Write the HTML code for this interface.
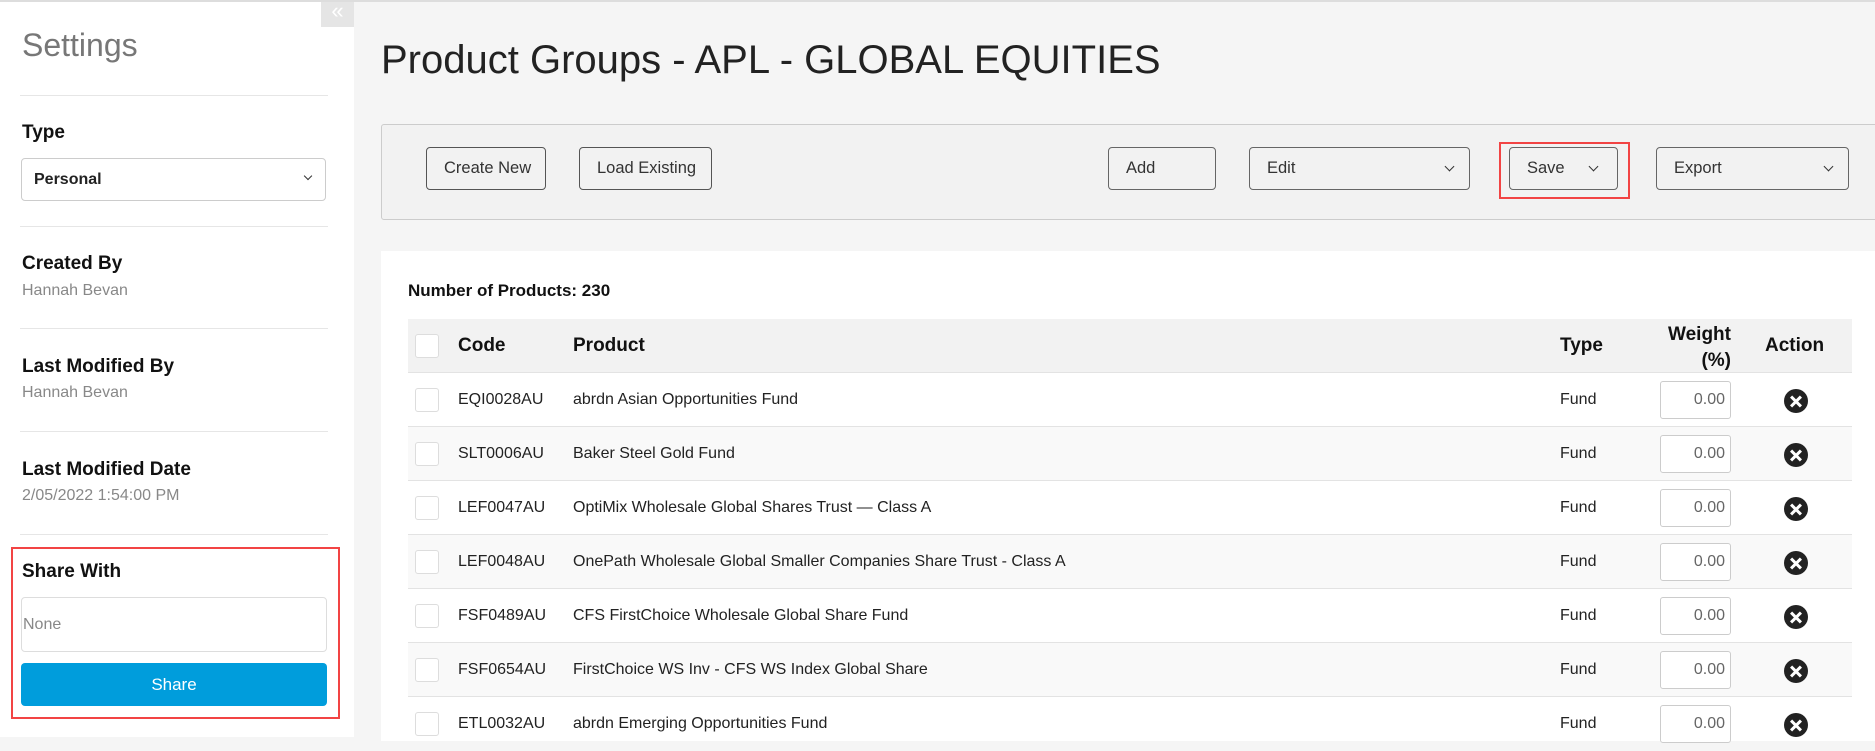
<!DOCTYPE html>
<html><head><meta charset="utf-8"><style>
*{box-sizing:border-box;margin:0;padding:0}
body{width:1875px;height:735px;overflow:hidden;font-family:"Liberation Sans",Arial,sans-serif;background:#f5f5f5;position:relative;border-top:2px solid #ddd}
.side{position:absolute;left:0;top:0;width:354px;height:735px;background:#fff}
.abs{position:absolute}
.hr{position:absolute;left:20px;width:308px;height:1px;background:#e6e6e6}
.lbl{position:absolute;left:22px;font-size:19px;font-weight:bold;color:#111}
.val{position:absolute;left:22px;font-size:16px;color:#888}
.btn{position:absolute;top:145px;height:43px;border:1px solid #555;border-radius:4px;font-size:16.5px;color:#333;padding-left:17px;line-height:41px;background:transparent}
.chev{position:absolute;right:16px;top:15px;width:7px;height:7px;border-right:1.5px solid #333;border-bottom:1.5px solid #333;transform:rotate(45deg)}
.row{position:absolute;left:408px;width:1444px;height:54px;border-top:1px solid #e3e3e3;font-size:16px;color:#222}
.row .t{position:absolute;top:0;line-height:54px}
.cb{position:absolute;left:7px;top:15px;width:24px;height:24px;border:1px solid #ddd;border-radius:3px;background:#fff}
.row .inp{position:absolute;left:1252px;top:8px;width:71px;height:38px;border:1px solid #ccc;border-radius:3px;background:#fff;text-align:right;padding-right:5px;line-height:36px;color:#666;font-size:16px}
.row .x{position:absolute;left:1376px;top:16px;width:24px;height:24px;border-radius:50%;background:#222}
.x:before,.x:after{content:"";position:absolute;left:5px;top:10.5px;width:14px;height:3px;background:#fff;transform:rotate(45deg)}
.x:after{transform:rotate(-45deg)}
</style></head><body>
<div class="side">
<div class="abs" style="left:321px;top:0;width:33px;height:25px;background:#e5e5e5;color:#fff;font-size:22px;line-height:18px;text-align:center">«</div>
<div class="abs" style="left:22px;top:25px;font-size:32px;color:#777">Settings</div>
<div class="hr" style="top:93px"></div>
<div class="lbl" style="top:120px">Type</div>
<div class="abs" style="left:21px;top:156px;width:305px;height:43px;border:1px solid #ccc;border-radius:4px;font-size:16px;font-weight:bold;color:#222;padding-left:12px;line-height:41px">Personal<div class="chev" style="top:14px;right:14px;width:6px;height:6px"></div></div>
<div class="hr" style="top:224px"></div>
<div class="lbl" style="top:251px">Created By</div>
<div class="val" style="top:280px">Hannah Bevan</div>
<div class="hr" style="top:326px"></div>
<div class="lbl" style="top:354px">Last Modified By</div>
<div class="val" style="top:382px">Hannah Bevan</div>
<div class="hr" style="top:429px"></div>
<div class="lbl" style="top:457px">Last Modified Date</div>
<div class="val" style="top:485px">2/05/2022 1:54:00 PM</div>
<div class="hr" style="top:532px"></div>
<div class="abs" style="left:11px;top:545px;width:329px;height:172px;border:2px solid #f24444"></div>
<div class="lbl" style="top:559px">Share With</div>
<div class="abs" style="left:21px;top:595px;width:306px;height:55px;border:1px solid #ddd;border-radius:4px;font-size:16px;color:#888;line-height:53px;padding-left:1px">None</div>
<div class="abs" style="left:21px;top:661px;width:306px;height:43px;background:#009ddc;border-radius:4px;color:#fff;font-size:17px;text-align:center;line-height:43px">Share</div>
</div>
<div class="abs" style="left:381px;top:36px;font-size:40px;color:#222">Product Groups - APL - GLOBAL EQUITIES</div>
<div class="abs" style="left:381px;top:122px;width:1500px;height:96px;background:#f2f2f2;border:1px solid #ccc;border-radius:3px"></div>
<div class="btn" style="left:426px;width:120px">Create New</div>
<div class="btn" style="left:579px;width:133px">Load Existing</div>
<div class="btn" style="left:1108px;width:108px;border-color:#666">Add</div>
<div class="btn" style="left:1249px;width:221px;border-color:#666">Edit<div class="chev"></div></div>
<div class="btn" style="left:1509px;width:109px;border-color:#666">Save<div class="chev" style="right:20px"></div></div>
<div class="abs" style="left:1499px;top:140px;width:131px;height:57px;border:2px solid #f24444"></div>
<div class="btn" style="left:1656px;width:193px;border-color:#666">Export<div class="chev"></div></div>
<div class="abs" style="left:381px;top:249px;width:1500px;height:490px;background:#fff"></div>
<div class="abs" style="left:408px;top:279px;font-size:17px;font-weight:bold;color:#111">Number of Products: 230</div>
<div class="abs" style="left:408px;top:317px;width:1444px;height:53px;background:#f2f2f2;font-size:19px;font-weight:bold;color:#111">
<div class="cb" style="top:15px"></div>
<div class="abs" style="left:50px;top:16px">Code</div>
<div class="abs" style="left:165px;top:16px">Product</div>
<div class="abs" style="left:1152px;top:16px">Type</div>
<div class="abs" style="left:1240px;top:3px;width:83px;text-align:right;line-height:26px">Weight<br>(%)</div>
<div class="abs" style="left:1357px;top:16px">Action</div>
</div>
<div class="row" style="top:370px"><span class="cb"></span><div class="t" style="left:50px">EQI0028AU</div><div class="t" style="left:165px">abrdn Asian Opportunities Fund</div><div class="t" style="left:1152px">Fund</div><div class="inp">0.00</div><div class="x"></div></div>
<div class="row" style="top:424px;background:#f9f9f9"><span class="cb"></span><div class="t" style="left:50px">SLT0006AU</div><div class="t" style="left:165px">Baker Steel Gold Fund</div><div class="t" style="left:1152px">Fund</div><div class="inp">0.00</div><div class="x"></div></div>
<div class="row" style="top:478px"><span class="cb"></span><div class="t" style="left:50px">LEF0047AU</div><div class="t" style="left:165px">OptiMix Wholesale Global Shares Trust — Class A</div><div class="t" style="left:1152px">Fund</div><div class="inp">0.00</div><div class="x"></div></div>
<div class="row" style="top:532px;background:#f9f9f9"><span class="cb"></span><div class="t" style="left:50px">LEF0048AU</div><div class="t" style="left:165px">OnePath Wholesale Global Smaller Companies Share Trust - Class A</div><div class="t" style="left:1152px">Fund</div><div class="inp">0.00</div><div class="x"></div></div>
<div class="row" style="top:586px"><span class="cb"></span><div class="t" style="left:50px">FSF0489AU</div><div class="t" style="left:165px">CFS FirstChoice Wholesale Global Share Fund</div><div class="t" style="left:1152px">Fund</div><div class="inp">0.00</div><div class="x"></div></div>
<div class="row" style="top:640px;background:#f9f9f9"><span class="cb"></span><div class="t" style="left:50px">FSF0654AU</div><div class="t" style="left:165px">FirstChoice WS Inv - CFS WS Index Global Share</div><div class="t" style="left:1152px">Fund</div><div class="inp">0.00</div><div class="x"></div></div>
<div class="row" style="top:694px"><span class="cb"></span><div class="t" style="left:50px">ETL0032AU</div><div class="t" style="left:165px">abrdn Emerging Opportunities Fund</div><div class="t" style="left:1152px">Fund</div><div class="inp">0.00</div><div class="x"></div></div>
</body></html>
